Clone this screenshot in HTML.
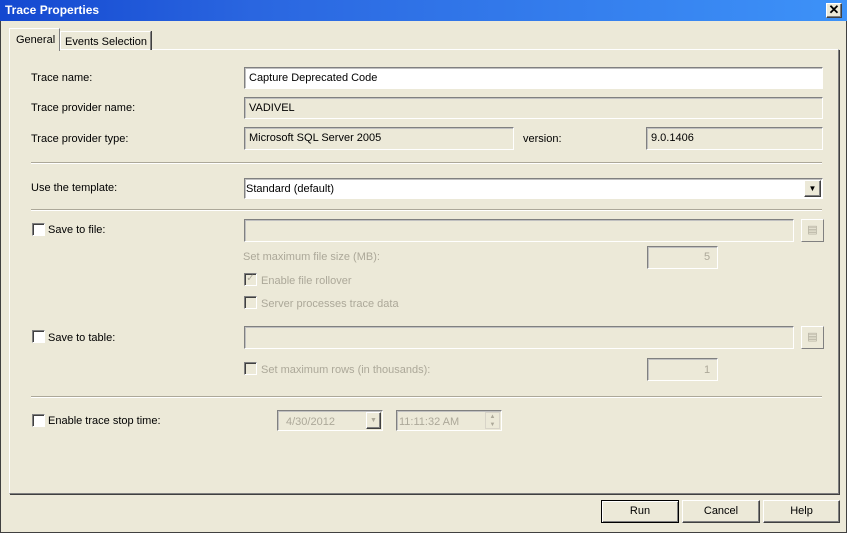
<!DOCTYPE html>
<html><head><style>
*{margin:0;padding:0;box-sizing:border-box}
body{width:847px;height:533px;background:#ECE9D8;font-family:"Liberation Sans",sans-serif;font-size:11px;color:#000;position:relative;overflow:hidden}
.a{position:absolute}
.t{position:absolute;white-space:nowrap;line-height:13px;margin-top:1px}
.g{color:#ACA899}
.box{position:absolute;border-top:1px solid #808080;border-left:1px solid #808080;border-bottom:1px solid #fff;border-right:1px solid #fff;box-shadow:inset 1px 1px 0 #c0c0c0}
.w{background:#fff}
.sep{position:absolute;height:2px;border-top:1px solid #ACA899;border-bottom:1px solid #fff}
.cb{position:absolute;width:13px;height:13px;background:#fff;border-top:1px solid #808080;border-left:1px solid #808080;border-bottom:1px solid #fff;border-right:1px solid #fff;box-shadow:inset 1px 1px 0 #404040}
.cb.d{background:#ECE9D8}
.btn{position:absolute;background:#ECE9D8;border-top:1px solid #fff;border-left:1px solid #fff;border-right:1px solid #404040;border-bottom:1px solid #404040;box-shadow:inset -1px -1px 0 #808080;text-align:center;line-height:20px}
</style></head><body>
<div class="a" style="left:0;top:0;width:847px;height:533px;border:1px solid #404040;border-top:none"></div>
<div class="a" style="left:0;top:0;width:847px;height:21px;background:linear-gradient(to right,#1448d0,#2a66e0 30%,#3d92f8 100%)"></div>
<div class="t" style="left:5px;top:3px;color:#fff;font-weight:bold;font-size:12px">Trace Properties</div>
<div class="btn" style="left:826px;top:3px;width:16px;height:15px;line-height:12px;font-weight:bold;font-size:13px">✕</div>
<div class="a" style="left:9px;top:49px;width:830px;height:445px;border-top:1px solid #fff;border-left:1px solid #fff;border-right:1px solid #808080;border-bottom:1px solid #808080;box-shadow:1px 1px 0 #404040"></div>
<div class="a" style="left:60px;top:31px;width:91px;height:19px;border-top:1px solid #fff;border-left:1px solid #fff;border-right:1px solid #808080;box-shadow:1px 0 0 #404040"></div>
<div class="t" style="left:65px;top:35px">Events Selection</div>
<div class="a" style="left:9px;top:28px;width:51px;height:23px;background:#ECE9D8;border-top:1px solid #fff;border-left:1px solid #fff;border-right:1px solid #808080"></div>
<div class="t" style="left:16px;top:33px">General</div>

<div class="t" style="left:31px;top:71px">Trace name:</div>
<div class="box w" style="left:244px;top:67px;width:579px;height:22px"></div>
<div class="t" style="left:249px;top:71px">Capture Deprecated Code</div>
<div class="t" style="left:31px;top:101px">Trace provider name:</div>
<div class="box" style="left:244px;top:97px;width:579px;height:22px"></div>
<div class="t" style="left:249px;top:101px">VADIVEL</div>
<div class="t" style="left:31px;top:132px">Trace provider type:</div>
<div class="box" style="left:244px;top:127px;width:270px;height:23px"></div>
<div class="t" style="left:249px;top:131px">Microsoft SQL Server 2005</div>
<div class="t" style="left:523px;top:132px">version:</div>
<div class="box" style="left:646px;top:127px;width:177px;height:23px"></div>
<div class="t" style="left:651px;top:131px">9.0.1406</div>
<div class="sep" style="left:31px;top:162px;width:791px"></div>
<div class="t" style="left:31px;top:181px">Use the template:</div>
<div class="box w" style="left:244px;top:178px;width:579px;height:21px"></div>
<div class="t" style="left:246px;top:182px">Standard (default)</div>
<div class="btn" style="left:804px;top:180px;width:17px;height:17px;line-height:15px;font-size:8px">▼</div>
<div class="sep" style="left:31px;top:209px;width:791px"></div>

<div class="cb" style="left:32px;top:223px"></div>
<div class="t" style="left:48px;top:223px">Save to file:</div>
<div class="box" style="left:244px;top:219px;width:550px;height:23px"></div>
<div class="btn" style="left:801px;top:219px;width:23px;height:23px;border-right-color:#808080;border-bottom-color:#808080;box-shadow:none;color:#ACA899;line-height:20px">▤</div>
<div class="t g" style="left:243px;top:250px">Set maximum file size (MB):</div>
<div class="box" style="left:647px;top:246px;width:71px;height:23px"></div>
<div class="t g" style="left:704px;top:250px">5</div>
<div class="cb d" style="left:244px;top:273px;color:#ACA899;font-size:10px;line-height:10px;text-align:center">✓</div>
<div class="t g" style="left:261px;top:274px">Enable file rollover</div>
<div class="cb d" style="left:244px;top:296px"></div>
<div class="t g" style="left:261px;top:297px">Server processes trace data</div>

<div class="cb" style="left:32px;top:330px"></div>
<div class="t" style="left:48px;top:331px">Save to table:</div>
<div class="box" style="left:244px;top:326px;width:550px;height:23px"></div>
<div class="btn" style="left:801px;top:326px;width:23px;height:23px;border-right-color:#808080;border-bottom-color:#808080;box-shadow:none;color:#ACA899;line-height:20px">▤</div>
<div class="cb d" style="left:244px;top:362px"></div>
<div class="t g" style="left:261px;top:363px">Set maximum rows (in thousands):</div>
<div class="box" style="left:647px;top:358px;width:71px;height:23px"></div>
<div class="t g" style="left:704px;top:363px">1</div>
<div class="sep" style="left:31px;top:396px;width:791px"></div>

<div class="cb" style="left:32px;top:414px"></div>
<div class="t" style="left:48px;top:414px">Enable trace stop time:</div>
<div class="box" style="left:277px;top:410px;width:106px;height:21px"></div>
<div class="t g" style="left:286px;top:415px">4/30/2012</div>
<div class="btn" style="left:366px;top:412px;width:15px;height:17px;line-height:15px;font-size:7px;color:#ACA899">▼</div>
<div class="box" style="left:396px;top:410px;width:106px;height:21px"></div>
<div class="t g" style="left:399px;top:415px">11:11:32 AM</div>
<div class="a" style="left:485px;top:412px;width:15px;height:17px;border:1px solid #d8d4c8;color:#ACA899;font-size:6px;text-align:center;line-height:8px">▲<br>▼</div>

<div class="btn" style="left:601px;top:500px;width:78px;height:23px;border:1px solid #000;box-shadow:inset 1px 1px 0 #fff,inset -1px -1px 0 #808080">Run</div>
<div class="btn" style="left:682px;top:500px;width:78px;height:23px">Cancel</div>
<div class="btn" style="left:763px;top:500px;width:77px;height:23px">Help</div>
</body></html>
